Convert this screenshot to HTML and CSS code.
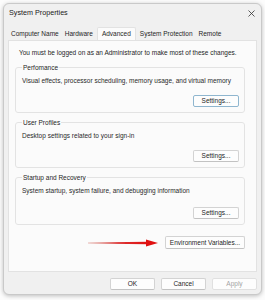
FILE: index.html
```html
<!DOCTYPE html>
<html>
<head>
<meta charset="utf-8">
<link rel="stylesheet" href="styles.css">
</head>
<body>
<div class="window">
  <div class="titlebar">
    <span class="title">System Properties</span>
    <svg class="close" width="7" height="7" viewBox="0 0 7 7"><path d="M0.5 0.5 L6.5 6.5 M6.5 0.5 L0.5 6.5" stroke="#333" stroke-width="0.8" fill="none"/></svg>
  </div>
  <div class="tabs">
    <span class="tab">Computer Name</span>
    <span class="tab">Hardware</span>
    <span class="tab active">Advanced</span>
    <span class="tab">System Protection</span>
    <span class="tab">Remote</span>
  </div>
  <div class="panel">
    <div class="notice">You must be logged on as an Administrator to make most of these changes.</div>
    <fieldset class="group">
      <legend>Perfomance</legend>
      <div class="desc">Visual effects, processor scheduling, memory usage, and virtual memory</div>
      <div class="btnrow"><button class="btn focused">Settings...</button></div>
    </fieldset>
    <fieldset class="group">
      <legend>User Profiles</legend>
      <div class="desc">Desktop settings related to your sign-in</div>
      <div class="btnrow"><button class="btn">Settings...</button></div>
    </fieldset>
    <fieldset class="group group-tall">
      <legend>Startup and Recovery</legend>
      <div class="desc">System startup, system failure, and debugging information</div>
      <div class="btnrow"><button class="btn">Settings...</button></div>
    </fieldset>
    <div class="envrow">
      <svg class="arrow" width="70" height="8" viewBox="0 0 70 8">
        <defs>
          <linearGradient id="ag" x1="0" y1="0" x2="1" y2="0">
            <stop offset="0" stop-color="#c0392b" stop-opacity="0.35"/>
            <stop offset="0.5" stop-color="#d91c1c" stop-opacity="0.9"/>
            <stop offset="1" stop-color="#e01010"/>
          </linearGradient>
        </defs>
        <polygon points="0,3.6 60,2.7 60,5.3 0,4.4" fill="url(#ag)"/>
        <polygon points="58,0.6 70,4 58,7.4" fill="#e01010"/>
      </svg>
      <button class="btn env">Environment Variables...</button>
    </div>
  </div>
  <div class="footer">
    <button class="btn action">OK</button>
    <button class="btn action">Cancel</button>
    <button class="btn action disabled">Apply</button>
  </div>
</div>
</body>
</html>
```

FILE: styles.css
```css
* { box-sizing: border-box; }
html, body {
  margin: 0;
  padding: 0;
  width: 265px;
  height: 300px;
  background: #fcfcfc;
  overflow: hidden;
  font-family: "Liberation Sans", Arial, sans-serif;
  font-size: 6.5px;
  color: #1e1e1e;
}
.window {
  margin: 3px 0 0 3px;
  width: 259px;
  height: 292px;
  border: 1px solid #c9c9c9;
  border-radius: 6px;
  background: #f0f0f0;
  box-shadow: 0 1px 4px rgba(0,0,0,0.25);
  display: flex;
  flex-direction: column;
  overflow: hidden;
}
.titlebar {
  height: 23px;
  flex: none;
  display: flex;
  justify-content: space-between;
  align-items: flex-start;
  padding: 4px 6px 0 5px;
}
.title {
  font-size: 7.2px;
  line-height: 9px;
  color: #1a1a1a;
}
.close { margin-top: 1.5px; }
.tabs {
  height: 13px;
  flex: none;
  display: flex;
  padding-left: 4px;
}
.tab {
  line-height: 13px;
  padding: 0 3px;
  white-space: nowrap;
}
.tab.active {
  background: #fbfbfb;
  padding: 0 4px;
  margin: 0 1px;
  border: 1px solid #e2e2e2;
  border-bottom: none;
  line-height: 11px;
  border-radius: 2px 2px 0 0;
}
.panel {
  flex: 1;
  margin: 0 4px;
  background: #fbfbfb;
  border: 1px solid #e2e2e2;
  padding: 7px 11px 0 6px;
  display: flex;
  flex-direction: column;
}
.notice {
  line-height: 9px;
  padding-left: 4px;
  white-space: nowrap;
}
.group {
  margin: 6px 0 0 0;
  border: 1px solid #e3e3e3;
  border-radius: 3px;
  padding: 4px 5px 5px 6px;
  min-width: 0;
}
.group + .group { margin-top: 5px; }
.group legend {
  padding: 0 1px;
  line-height: 9px;
  color: #262626;
}
.desc {
  line-height: 9px;
  color: #2a2a2a;
  white-space: nowrap;
}
.btnrow {
  display: flex;
  justify-content: flex-end;
  margin-top: 10px;
}
.group-tall .btnrow { margin-top: 12px; }
.btn {
  font-family: inherit;
  font-size: 6.5px;
  color: #1e1e1e;
  height: 12px;
  padding: 0;
  margin: 0;
  background: #fdfdfd;
  border: 1px solid #d3d3d3;
  border-bottom-color: #c2c2c2;
  border-radius: 2px;
  line-height: 10px;
  width: 46px;
  white-space: nowrap;
}
.btn.focused { border-color: #8fb6cf; }
.envrow {
  display: flex;
  justify-content: flex-end;
  align-items: center;
  gap: 7px;
  margin-top: 11px;
}
.btn.env {
  width: 80px;
  height: 13px;
}
.arrow { display: block; }
.footer {
  height: 22px;
  flex: none;
  display: flex;
  justify-content: flex-end;
  gap: 6px;
  padding: 6px 4px 0 0;
}
.btn.action { width: 45px; }
.btn.disabled { color: #a3a3a3; border-color: #e0e0e0; }
```
